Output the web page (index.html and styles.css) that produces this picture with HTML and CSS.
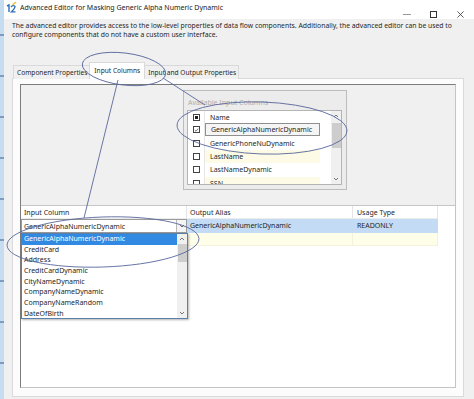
FILE: index.html
```html
<!DOCTYPE html>
<html lang="en">
<head>
  <meta charset="UTF-8" />
  <link rel="stylesheet" href="styles.css">
</head>
<body>
  <div class="strip"></div>
  <div class="window">
    <div class="titlebar">
      <svg class="app-icon" viewBox="0 0 12 12">
        <path d="M2 5 L4 4 L4 11" fill="none" stroke="#2f6fb8" stroke-width="1.4"/>
        <path d="M6 6 Q8 3.5 10 5.5 Q10 7.5 6.5 10.8 L10.5 10.8" fill="none" stroke="#2f6fb8" stroke-width="1.3"/>
        <path d="M7 3.5 L10.5 0.5 L11.5 1.5 L8 4.5 Z" fill="#f2c230"/>
      </svg>
      <span class="title">Advanced Editor for Masking Generic Alpha Numeric Dynamic</span>
      <div class="controls">
        <div class="ctl"><span class="min"></span></div>
        <div class="ctl"><span class="max"></span></div>
        <div class="ctl">
          <svg class="close" viewBox="0 0 8 8"><path d="M0.5 0.5 L7.5 7.5 M7.5 0.5 L0.5 7.5" stroke="#333" stroke-width="0.9"/></svg>
        </div>
      </div>
    </div>

    <p class="desc">The advanced editor provides access to the low-level properties of data flow components. Additionally, the advanced editor can be used to<br>configure components that do not have a custom user interface.</p>

    <div class="tabs">
      <div class="tab">Component Properties</div>
      <div class="tab active">Input Columns</div>
      <div class="tab">Input and Output Properties</div>
    </div>

    <div class="tab-page">
      <div class="inner">
        <div class="top-area">
          <div class="group">
            <div class="group-label">Available Input Columns</div>
            <div class="col-list">
              <div class="rows">
                <div class="row first"><span class="cb-cell"><span class="cb mixed"></span></span><span class="name">Name</span></div>
                <div class="row"><span class="cb-cell"><span class="cb"><svg viewBox="0 0 7 7"><path d="M1.2 3.6 L2.8 5.2 L5.8 1.6" fill="none" stroke="#222" stroke-width="0.9"/></svg></span></span><span class="name picked">GenericAlphaNumericDynamic</span></div>
                <div class="row"><span class="cb-cell"><span class="cb"></span></span><span class="name">GenericPhoneNuDynamic</span></div>
                <div class="row"><span class="cb-cell"><span class="cb"></span></span><span class="name cream">LastName</span></div>
                <div class="row"><span class="cb-cell"><span class="cb"></span></span><span class="name">LastNameDynamic</span></div>
                <div class="row"><span class="cb-cell"><span class="cb"></span></span><span class="name cream">SSN</span></div>
              </div>
              <div class="vscroll">
                <svg class="arrow" viewBox="0 0 6 4"><path d="M1 3 L3 1 L5 3" fill="none" stroke="#555" stroke-width="0.8"/></svg>
                <div class="thumb list-thumb"></div>
                <svg class="arrow down" viewBox="0 0 6 4"><path d="M1 1 L3 3 L5 1" fill="none" stroke="#555" stroke-width="0.8"/></svg>
              </div>
            </div>
          </div>
        </div>

        <div class="grid">
          <div class="grid-row head">
            <div class="cell c1">Input Column</div>
            <div class="cell c2">Output Alias</div>
            <div class="cell c3">Usage Type</div>
          </div>
          <div class="grid-row">
            <div class="cell c1 combo">
              <span class="combo-text">GenericAlphaNumericDynamic</span>
              <span class="combo-btn"><svg viewBox="0 0 6 4"><path d="M1 1 L3 3 L5 1" fill="none" stroke="#444" stroke-width="0.8"/></svg></span>
            </div>
            <div class="cell c2 blue">GenericAlphaNumericDynamic</div>
            <div class="cell c3 blue">READONLY</div>
          </div>
          <div class="grid-row new">
            <div class="cell c1"></div>
            <div class="cell c2 cream"></div>
            <div class="cell c3 cream"></div>
          </div>

          <div class="dropdown">
            <div class="items">
              <div class="item active">GenericAlphaNumericDynamic</div>
              <div class="item">CreditCard</div>
              <div class="item">Address</div>
              <div class="item">CreditCardDynamic</div>
              <div class="item">CityNameDynamic</div>
              <div class="item">CompanyNameDynamic</div>
              <div class="item">CompanyNameRandom</div>
              <div class="item">DateOfBirth</div>
            </div>
            <div class="vscroll dd-scroll">
              <svg class="arrow" viewBox="0 0 6 4"><path d="M1 3 L3 1 L5 3" fill="none" stroke="#555" stroke-width="0.8"/></svg>
              <div class="thumb dd-thumb"></div>
              <svg class="arrow down" viewBox="0 0 6 4"><path d="M1 1 L3 3 L5 1" fill="none" stroke="#555" stroke-width="0.8"/></svg>
            </div>
          </div>
        </div>
      </div>
    </div>
  </div>

  <!-- hand-drawn annotations over the dialog -->
  <svg class="annot" viewBox="0 0 474 399">
    <g fill="none" stroke="#5a689b" stroke-width="0.9">
      <ellipse cx="124" cy="69" rx="42" ry="16" transform="rotate(7 124 69)"/>
      <ellipse cx="262" cy="128" rx="85" ry="26" transform="rotate(2 262 128)"/>
      <ellipse cx="103" cy="242" rx="96" ry="25" transform="rotate(-2 103 242)"/>
      <path d="M118 80 L84 218"/>
      <path d="M163 78 L205 105"/>
    </g>
  </svg>
</body>
</html>
```

FILE: styles.css
```css
*, *::before, *::after { box-sizing: border-box; }
body {
  margin: 0;
  width: 474px;
  height: 399px;
  overflow: hidden;
  position: relative;
  display: flex;
  background: #f0f0f0;
  font-family: "Segoe UI", "Noto Sans", sans-serif;
  font-size: 7px;
  color: #262626;
}
.strip {
  flex: none;
  width: 4px;
  background: repeating-linear-gradient(to bottom, #c6dcf0 0 34px, #7d9cc0 34px 36px, #c6dcf0 36px 41px);
}
.window { flex: 1; display: flex; flex-direction: column; }

/* title bar */
.titlebar { flex: none; height: 19px; background: #fff; display: flex; align-items: flex-start; }
.app-icon { width: 12px; height: 12px; margin: 1px 0 0 1px; }
.title { margin: 3px 0 0 3px; line-height: 9px; font-size: 7px; color: #222; }
.controls { margin-left: auto; display: flex; }
.ctl { width: 27px; height: 19px; padding-top: 10px; display: flex; justify-content: center; align-items: center; }
.min { width: 8px; height: 1px; background: #999; }
.max { width: 7px; height: 7px; border: 1px solid #333; }
.close { width: 7px; height: 7px; }

.desc {
  flex: none;
  height: 43px;
  margin: 0;
  padding: 3px 8px 0;
  font-size: 6.8px;
  line-height: 8.5px;
  white-space: nowrap;
}

/* tabs */
.tabs { flex: none; height: 17px; margin-bottom: -1px; padding-left: 9px; display: flex; align-items: flex-end; position: relative; z-index: 1; font-size: 6.6px; }
.tab {
  height: 14px;
  padding: 0 2px 0 3px;
  line-height: 13px;
  border: 1px solid #d9d9d9;
  border-bottom: none;
  background: #f0f0f0;
}
.tab.active {
  height: 17px;
  margin: 0 -1px 0 -1px;
  padding: 1px 4px 0;
  line-height: 14px;
  background: #fff;
  position: relative;
  z-index: 1;
}

.tab-page {
  flex: none;
  height: 319px;
  margin: 0 10px 0 8px;
  padding: 5px 7px 8px;
  border: 1px solid #dadada;
  background: #fcfcfc;
}
.inner {
  height: 100%;
  display: flex;
  flex-direction: column;
  border: 1px solid;
  border-color: #7c7c7c #c4c4c4 #c4c4c4 #7c7c7c;
  background: #f0f0f0;
}

/* available input columns */
.top-area { flex: none; height: 120px; padding: 5px 0 0 162px; }
.group { width: 164px; height: 100px; border: 1px solid #bcbcbc; background: #ececec; padding: 0 3px; }
.group-label { height: 19px; padding: 7px 0 0 1px; line-height: 9px; color: #adadad; }
.col-list { width: 155px; height: 75px; border: 1px solid #b4b4b4; background: #fff; display: flex; overflow: hidden; }
.rows { flex: 1; }
.row { height: 13.4px; display: flex; }
.row.first { height: 12px; }
.cb-cell { width: 17px; flex: none; border-right: 1px solid #e6e6e6; display: flex; justify-content: center; align-items: center; }
.cb { width: 7px; height: 7px; border: 1px solid #444; background: #fff; display: flex; justify-content: center; align-items: center; }
.cb svg { width: 6px; height: 6px; }
.cb.mixed::after { content: ""; width: 3px; height: 3px; background: #222; }
.name { width: 115px; flex: none; padding-left: 5px; display: flex; align-items: center; }
.name.picked { border: 1px solid #8f8f8f; background: #f5f5f5; padding-left: 5px; }
.name.cream { background: #fdfbe5; }

.vscroll { width: 10px; flex: none; background: #f0f0f0; display: flex; flex-direction: column; align-items: center; }
.vscroll .arrow { width: 6px; height: 4px; margin-top: 3px; }
.vscroll .arrow.down { margin-top: auto; margin-bottom: 3px; }
.thumb { width: 9px; background: #cdcdcd; }
.list-thumb { height: 25px; margin-top: 5px; }

/* grid */
.grid { flex: 1; background: #fff; border-top: 1px solid #c6c6c6; position: relative; }
.grid-row { display: flex; height: 14px; }
.grid-row.head { height: 13px; }
.grid-row.new { height: 13px; }
.cell { padding-left: 3px; display: flex; align-items: center; border-right: 1px solid #e4e4e4; border-bottom: 1px solid #ececec; white-space: nowrap; overflow: hidden; }
.c1 { width: 166px; }
.c2 { width: 166px; }
.c3 { width: 85px; padding-left: 4px; }
.cell.blue { background: #c3dbf4; border-color: #c3dbf4; }
.cell.cream { background: #fffee9; border-color: #f4f2dc; }
.combo { padding: 0; border: 1px solid #9a9a9a; background: #fff; }
.combo-text { flex: 1; padding-left: 2px; }
.combo-btn { width: 10px; height: 100%; border-left: 1px solid #b8b8b8; display: flex; justify-content: center; align-items: center; background: #f4f4f4; }
.combo-btn svg { width: 6px; height: 4px; }

.dropdown {
  position: absolute;
  left: 0;
  top: 27px;
  width: 167px;
  height: 86px;
  border: 1px solid #5a7fa9;
  background: #fff;
  box-shadow: 1px 1px 2px rgba(0,0,0,0.3);
  display: flex;
  z-index: 2;
}
.items { flex: 1; }
.item { height: 10.7px; line-height: 10.7px; padding-left: 2px; white-space: nowrap; }
.item.active { background: #3289e2; color: #fff; }
.dd-scroll .arrow { margin-top: 3px; }
.dd-thumb { height: 18px; margin-top: 3px; }

.annot { position: absolute; left: 0; top: 0; width: 474px; height: 399px; pointer-events: none; z-index: 5; }
```
